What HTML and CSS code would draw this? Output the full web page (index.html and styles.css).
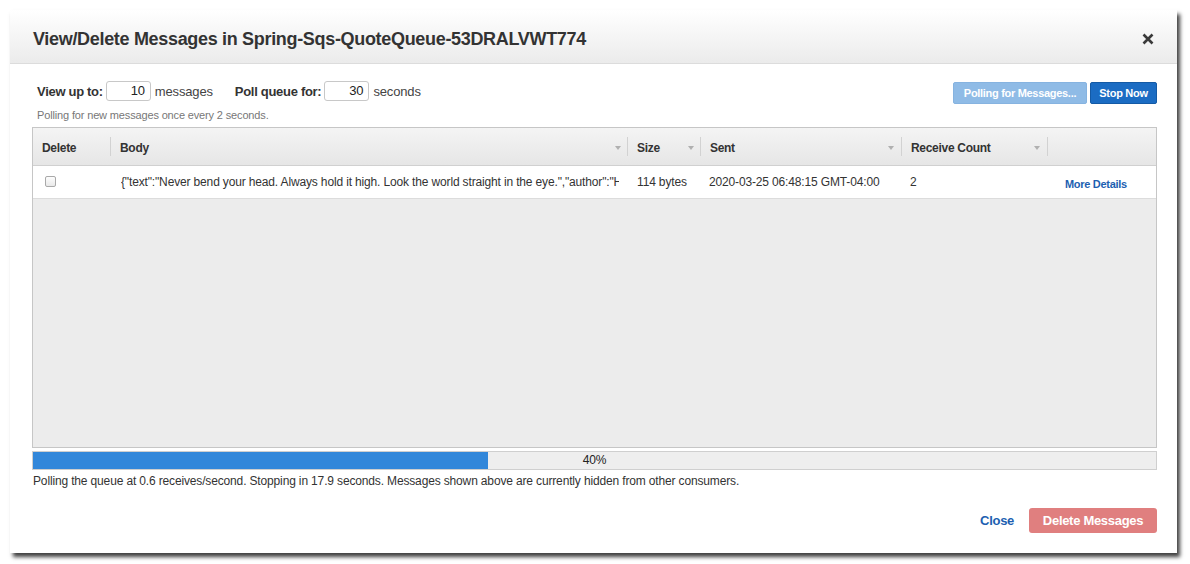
FILE: index.html
```html
<!DOCTYPE html>
<html>
<head>
<meta charset="utf-8">
<link rel="stylesheet" href="styles.css">
</head>
<body>
<div class="page">
  <div class="dialog">
    <div class="dlg-head">
      <h1 class="title">View/Delete Messages in Spring-Sqs-QuoteQueue-53DRALVWT774</h1>
      <svg class="close-x" width="12" height="12" viewBox="0 0 12 12"><path d="M1.5 1.5 L10.5 10.5 M10.5 1.5 L1.5 10.5" stroke="#3a3a3a" stroke-width="2.6" stroke-linecap="butt"/></svg>
    </div>
    <div class="dlg-body">
      <div class="controls">
        <div class="ctl-left">
          <div class="fields">
            <span class="lbl">View up to:</span>
            <span class="num">10</span>
            <span class="unit">messages</span>
            <span class="lbl lbl2">Poll queue for:</span>
            <span class="num">30</span>
            <span class="unit">seconds</span>
          </div>
          <div class="hint">Polling for new messages once every 2 seconds.</div>
        </div>
        <div class="ctl-btns">
          <span class="btn btn-polling">Polling for Messages...</span>
          <span class="btn btn-stop">Stop Now</span>
        </div>
      </div>

      <div class="grid">
        <div class="ghead">
          <div class="hc c-del"><span class="ht">Delete</span></div>
          <div class="hc c-body"><span class="sep"></span><span class="ht">Body</span><span class="arr"></span></div>
          <div class="hc c-size"><span class="sep"></span><span class="ht">Size</span><span class="arr"></span></div>
          <div class="hc c-sent"><span class="sep"></span><span class="ht">Sent</span><span class="arr"></span></div>
          <div class="hc c-rc"><span class="sep"></span><span class="ht">Receive Count</span><span class="arr"></span></div>
          <div class="hc c-more"><span class="sep"></span></div>
        </div>
        <div class="grow">
          <div class="rc c-del"><span class="chk"></span></div>
          <div class="rc c-body"><span class="bodytxt">{"text":"Never bend your head. Always hold it high. Look the world straight in the eye.","author":"Helen Keller"}</span></div>
          <div class="rc c-size">114 bytes</div>
          <div class="rc c-sent">2020-03-25 06:48:15 GMT-04:00</div>
          <div class="rc c-rc">2</div>
          <div class="rc c-more"><span class="more">More Details</span></div>
        </div>
        <div class="gfill"></div>
      </div>

      <div class="progress">
        <div class="fill" style="width:40.5%"></div>
        <span class="pct">40%</span>
      </div>
      <div class="status">Polling the queue at 0.6 receives/second. Stopping in 17.9 seconds. Messages shown above are currently hidden from other consumers.</div>

      <div class="footer">
        <span class="link-close">Close</span>
        <span class="btn-del">Delete Messages</span>
      </div>
    </div>
  </div>
</div>
</body>
</html>
```

FILE: styles.css
```css
html, body {
  margin: 0;
  padding: 0;
  background: #ffffff;
}
body {
  font-family: "Liberation Sans", Arial, sans-serif;
  color: #333;
  letter-spacing: -0.15px;
}
.page {
  padding: 10px 0 0 10px;
  width: 1190px;
  height: 564px;
  box-sizing: border-box;
}
.dialog {
  width: 1167px;
  height: 543px;
  background: #fff;
  box-shadow: 3px 4px 4px rgba(0,0,0,0.75);
  display: flex;
  flex-direction: column;
}
.dlg-head {
  border-bottom: 1px solid #dcdcdc;
  background: linear-gradient(#ffffff, #ebebeb);
  display: flex;
  align-items: center;
  justify-content: space-between;
  padding: 5px 23px 0 23px;
  box-sizing: border-box;
  height: 54px;
}
.title {
  margin: 0;
  font-size: 18px;
  font-weight: bold;
  color: #333;
  letter-spacing: -0.32px;
}
.close-x {
  margin-top: 0;
}
.dlg-body {
  padding: 0 20px 0 22px;
  display: flex;
  flex-direction: column;
}
.controls {
  display: flex;
  justify-content: space-between;
  align-items: flex-start;
}
.fields {
  margin-top: 17px;
  height: 20px;
  display: flex;
  align-items: center;
  font-size: 13px;
  padding-left: 5px;
}
.lbl {
  font-weight: bold;
  color: #333;
  letter-spacing: -0.3px;
}
.lbl2 { margin-left: 22px; }
.num {
  width: 45px;
  height: 20px;
  box-sizing: border-box;
  border: 1px solid #c8c8c8;
  border-radius: 3px;
  text-align: right;
  padding-right: 5px;
  line-height: 18px;
  font-size: 13px;
  color: #222;
  margin: 0 4px 0 3px;
}
.unit { color: #444; }
.hint {
  margin-top: 8px;
  font-size: 11px;
  line-height: 13px;
  color: #777;
  padding-left: 5px;
}
.ctl-btns {
  margin-top: 18px;
  display: flex;
  gap: 3px;
}
.btn {
  height: 22px;
  box-sizing: border-box;
  border-radius: 2px;
  font-size: 11px;
  font-weight: bold;
  color: #fff;
  display: flex;
  align-items: center;
  justify-content: center;
  letter-spacing: -0.3px;
}
.btn-polling {
  width: 134px;
  background: #8fbbe6;
  border: 1px solid #86b3e0;
}
.btn-stop {
  width: 67px;
  background: #1b6cc3;
  border: 1px solid #145aa5;
}
.grid {
  margin-top: 5px;
  border: 1px solid #c6c6c6;
  height: 321px;
  box-sizing: border-box;
  background: #ececec;
  display: flex;
  flex-direction: column;
}
.ghead, .grow {
  display: grid;
  grid-template-columns: 77px 517px 73px 201px 146px 1fr;
}
.ghead {
  height: 37px;
  border-bottom: 1px solid #d0d0d0;
  background: linear-gradient(#f4f4f4, #e6e6e6);
}
.hc {
  position: relative;
  display: flex;
  align-items: center;
  font-size: 12px;
  font-weight: bold;
  color: #333;
  padding-top: 2px;
  letter-spacing: -0.3px;
}
.hc .ht { padding-left: 10px; flex: 1; }
.c-del .ht { padding-left: 9px; }
.sep {
  position: absolute;
  left: 0;
  top: 9px;
  height: 19px;
  width: 1px;
  background: #d2d2d2;
}
.arr {
  width: 0;
  height: 0;
  border-left: 3.5px solid transparent;
  border-right: 3.5px solid transparent;
  border-top: 4px solid #b0b0b0;
  margin-right: 6px;
}
.c-sent .arr, .c-rc .arr { margin-right: 7px; }
.grow {
  height: 32px;
  background: #fff;
  border-bottom: 1px solid #dcdcdc;
}
.rc {
  font-size: 12px;
  color: #333;
  padding-top: 9px;
  padding-left: 10px;
  white-space: nowrap;
  overflow: hidden;
  min-width: 0;
}
.rc.c-del { padding-left: 12px; padding-top: 10px; }
.chk {
  display: block;
  width: 9px;
  height: 9px;
  border: 1px solid #a9a9a9;
  border-radius: 2px;
  background: linear-gradient(#fdfdfd, #e9e9e9);
}
.rc.c-body { padding-left: 11px; padding-right: 8px; }
.bodytxt { display: block; overflow: hidden; text-overflow: clip; }
.rc.c-size { padding-left: 10px; }
.rc.c-sent { padding-left: 9px; }
.rc.c-rc { padding-left: 9px; }
.rc.c-more { padding-left: 18px; padding-top: 11px; }
.more {
  font-size: 11px;
  font-weight: bold;
  color: #1d5fb1;
  letter-spacing: -0.3px;
}
.gfill { flex: 1; }
.progress {
  margin-top: 3px;
  height: 19px;
  box-sizing: border-box;
  border: 1px solid #cfcfcf;
  background: #eeeeee;
  position: relative;
}
.fill {
  height: 100%;
  background: #3287da;
}
.pct {
  position: absolute;
  left: 0;
  right: 0;
  top: 0;
  text-align: center;
  font-size: 12px;
  line-height: 17px;
  color: #222;
}
.status {
  margin-top: 4px;
  font-size: 12px;
  line-height: 14px;
  color: #333;
  padding-left: 1px;
}
.footer {
  margin-top: 20px;
  display: flex;
  justify-content: flex-end;
  align-items: center;
  gap: 15px;
}
.link-close {
  font-size: 13px;
  font-weight: bold;
  color: #1d5fb1;
  letter-spacing: -0.3px;
}
.btn-del {
  width: 128px;
  height: 25px;
  border-radius: 3px;
  background: #e07f7f;
  color: #fff;
  font-size: 13px;
  font-weight: bold;
  display: flex;
  align-items: center;
  justify-content: center;
  letter-spacing: -0.3px;
}
```
